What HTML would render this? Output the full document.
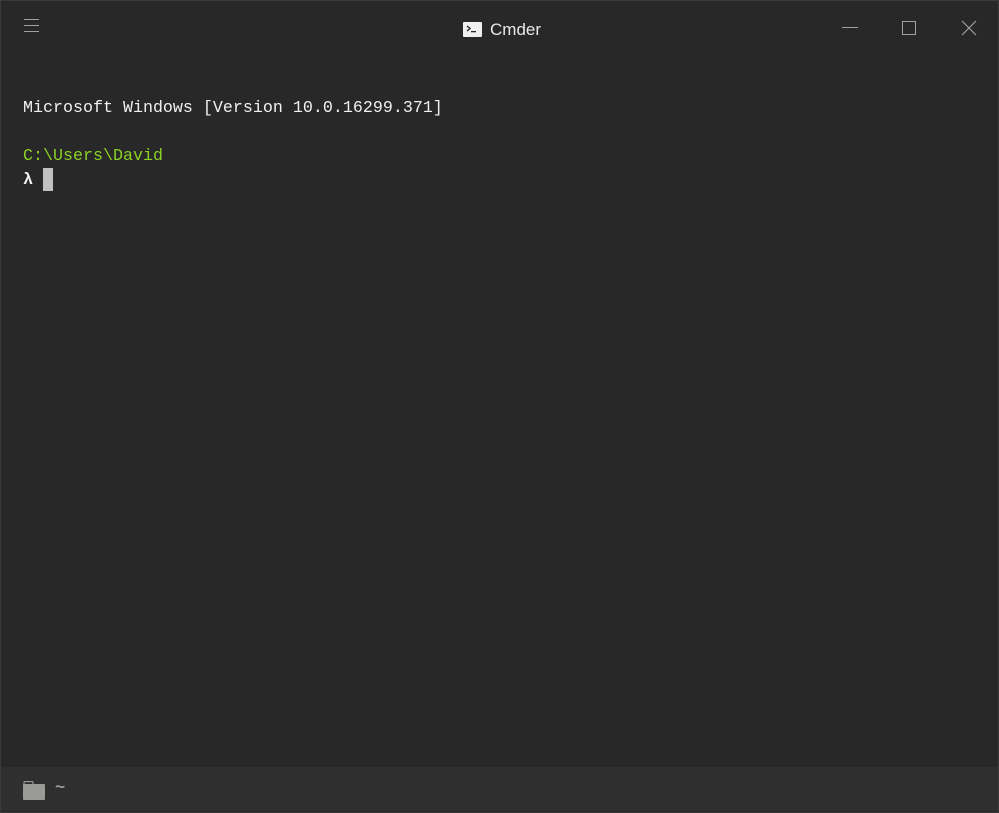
<!DOCTYPE html>
<html><head><meta charset="utf-8"><style>
html,body{margin:0;padding:0;width:999px;height:813px;overflow:hidden;background:#3a3a3a}
.win{position:absolute;left:1px;top:1px;width:997px;height:811px;background:#282828}
.t{position:absolute;font-family:"Liberation Mono",monospace;font-size:16.67px;line-height:24px;white-space:pre}
.ham{position:absolute;left:23px;height:1px;width:15px;background:#a0a0a0}
.title{position:absolute;left:489px;top:19px;font-family:"Liberation Sans",sans-serif;font-size:17px;color:#e8e8e8}
.status{position:absolute;left:0;top:766px;width:997px;height:44px;background:#2f2f2f}
</style></head><body>
<div class="win">
<div class="ham" style="top:18px"></div><div class="ham" style="top:24px"></div><div class="ham" style="top:30px"></div>
<svg style="position:absolute;left:462px;top:21px" width="19" height="15" viewBox="0 0 19 15"><rect width="19" height="15" rx="1" fill="#f0f0f0"/><path d="M4 4 L7 6.5 L4 9" stroke="#282828" stroke-width="1.4" fill="none"/><rect x="8" y="9" width="5" height="1.3" fill="#282828"/></svg>
<div class="title">Cmder</div>
<div style="position:absolute;left:841px;top:26px;width:16px;height:1px;background:#a0a0a0"></div>
<div style="position:absolute;left:901px;top:20px;width:12px;height:12px;border:1px solid #a0a0a0"></div>
<svg style="position:absolute;left:960px;top:19px" width="16" height="16"><path d="M1 1L15 15M15 1L1 15" stroke="#a0a0a0" stroke-width="1.2"/></svg>
<div class="t" style="left:22px;top:96px;color:#f0f0f0">Microsoft Windows [Version 10.0.16299.371]</div>
<div class="t" style="left:22px;top:144px;color:#8bd124">C:\Users\David</div>
<div class="t" style="left:22px;top:168px;color:#f0f0f0;font-weight:bold">λ</div>
<div style="position:absolute;left:42px;top:167px;width:10px;height:23px;background:#c0c0c0"></div>
<div class="status">
<svg style="position:absolute;left:22px;top:14px" width="22" height="20"><rect x="1" y="0.5" width="9" height="5" rx="1" fill="none" stroke="#9a9a96" stroke-width="1.2"/><rect x="0" y="3" width="22" height="16" rx="1" fill="#9a9a96"/></svg>
<div class="t" style="left:54px;top:10px;color:#9a9a96;font-size:17px;font-weight:bold">~</div>
</div>
</div>
</body></html>
